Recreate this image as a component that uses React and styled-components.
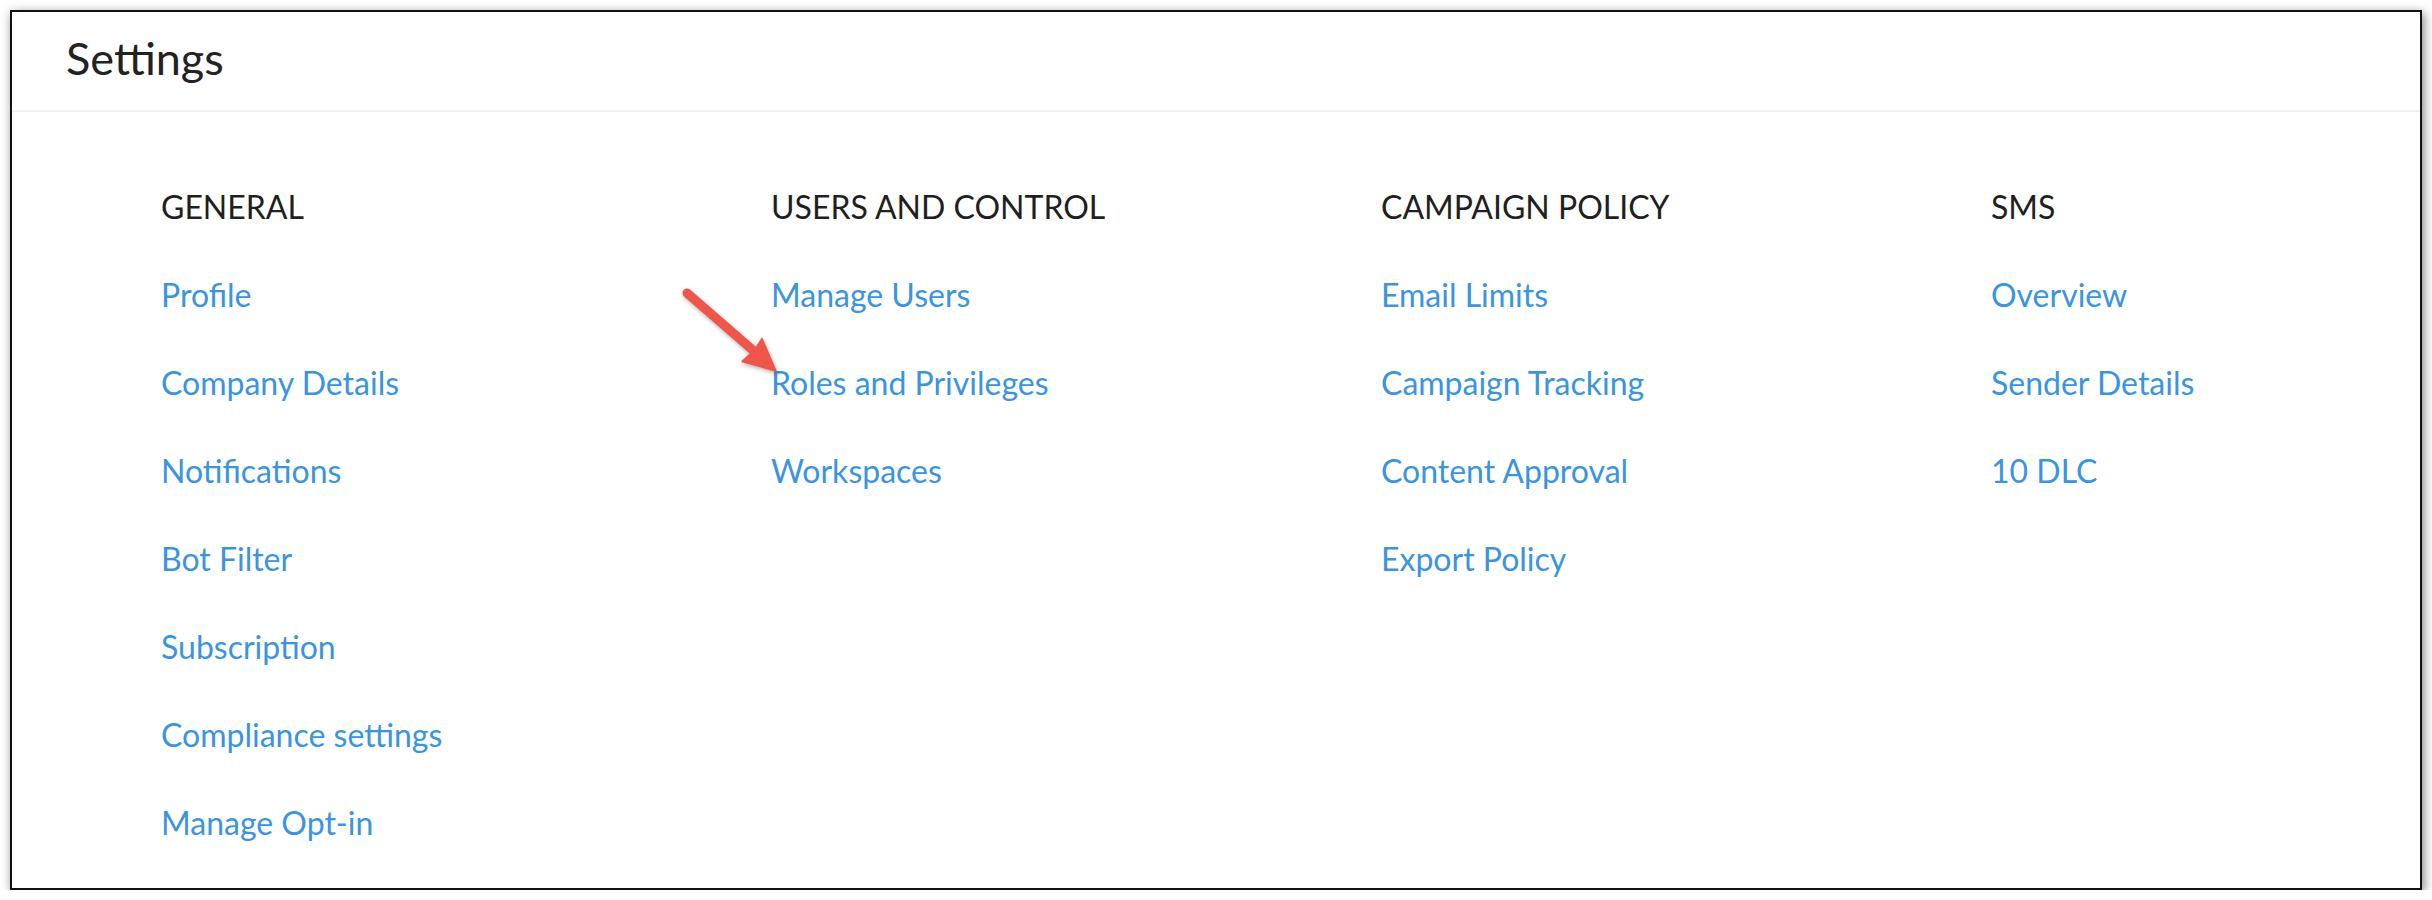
import React from 'react';
import styled, { createGlobalStyle } from 'styled-components';

const GlobalStyle = createGlobalStyle`
  body {
    margin: 0;
    background: #ffffff;
    font-family: Lato, 'Open Sans', sans-serif;
  }
`;

const sections = [
  {
    title: 'GENERAL',
    links: ['Profile', 'Company Details', 'Notifications', 'Bot Filter', 'Subscription', 'Compliance settings', 'Manage Opt-in'],
  },
  {
    title: 'USERS AND CONTROL',
    links: ['Manage Users', 'Roles and Privileges', 'Workspaces'],
  },
  {
    title: 'CAMPAIGN POLICY',
    links: ['Email Limits', 'Campaign Tracking', 'Content Approval', 'Export Policy'],
  },
  {
    title: 'SMS',
    links: ['Overview', 'Sender Details', '10 DLC'],
  },
];

function PointerArrow() {
  return (
    <ArrowMark width="110" height="100" viewBox="0 0 110 100">
      <line x1="11" y1="11" x2="79" y2="70" stroke="#ef5548" strokeWidth="9" strokeLinecap="round" />
      <path d="M100 89 L86 56.5 L79 67.5 L66 79.5 Z" fill="#ef5548" stroke="#ef5548" strokeWidth="1.5" strokeLinejoin="round" />
    </ArrowMark>
  );
}

export default function App() {
  return (
    <>
      <GlobalStyle />
      <Frame>
        <Header>
          <Title>Settings</Title>
        </Header>
        <Columns>
          {sections.map((section) => (
            <Column key={section.title}>
              <SectionTitle>{section.title}</SectionTitle>
              {section.links.map((link) => (
                <SettingLink key={link} href="#">{link}</SettingLink>
              ))}
            </Column>
          ))}
          <PointerArrow />
        </Columns>
      </Frame>
    </>
  );
}

const Frame = styled.div`
  box-sizing: border-box;
  margin: 10px 0 0 10px;
  width: 2412px;
  height: 880px;
  border: 2px solid #111;
  background: #fff;
  box-shadow: 2px 3px 10px rgba(0, 0, 0, 0.5);
  display: flex;
  flex-direction: column;
`;

const Header = styled.div`
  height: 100px;
  display: flex;
  align-items: center;
  padding: 0 0 6px 54px;
  box-sizing: border-box;
  border-bottom: 2px solid #eef1f6;
`;

const Title = styled.h1`
  margin: 0;
  font-family: Lato, sans-serif;
  font-weight: 400;
  font-size: 45px;
  color: #222;
`;

const Columns = styled.div`
  position: relative;
  display: grid;
  grid-template-columns: repeat(3, 610px) 1fr;
  padding: 75px 0 0 149px;
`;

const Column = styled.div`
  display: flex;
  flex-direction: column;
  align-items: flex-start;
  gap: 48px;
`;

const SectionTitle = styled.div`
  font-family: Lato, sans-serif;
  font-size: 32px;
  line-height: 40px;
  color: #1f1f1f;
`;

const SettingLink = styled.a`
  font-family: Lato, sans-serif;
  font-size: 32px;
  line-height: 40px;
  color: #3a94e0;
  text-decoration: none;
`;

const ArrowMark = styled.svg`
  position: absolute;
  left: 664px;
  top: 170px;
  filter: drop-shadow(1px 2px 2px rgba(0, 0, 0, 0.3));
`;
